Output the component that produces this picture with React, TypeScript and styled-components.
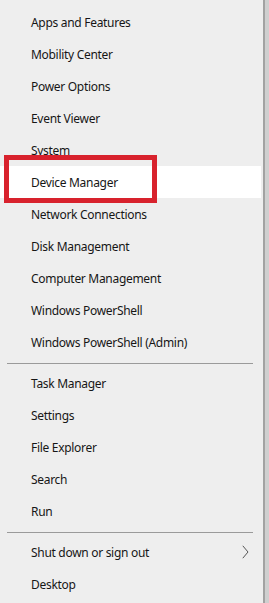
import React from 'react';
import styled, { createGlobalStyle } from 'styled-components';

const GlobalStyle = createGlobalStyle`
  html, body {
    margin: 0;
    padding: 0;
    background: #cfcfcf;
  }
  body {
    font-family: "Noto Sans", "Open Sans", sans-serif;
  }
`;

type Entry = { label: string; active?: boolean; submenu?: boolean } | 'sep';

const entries: Entry[] = [
  { label: 'Apps and Features' },
  { label: 'Mobility Center' },
  { label: 'Power Options' },
  { label: 'Event Viewer' },
  { label: 'System' },
  { label: 'Device Manager', active: true },
  { label: 'Network Connections' },
  { label: 'Disk Management' },
  { label: 'Computer Management' },
  { label: 'Windows PowerShell' },
  { label: 'Windows PowerShell (Admin)' },
  'sep',
  { label: 'Task Manager' },
  { label: 'Settings' },
  { label: 'File Explorer' },
  { label: 'Search' },
  { label: 'Run' },
  'sep',
  { label: 'Shut down or sign out', submenu: true },
  { label: 'Desktop' },
];

const Page = styled.div`
  display: flex;
  height: 603px;
  overflow: hidden;
`;

const Menu = styled.ul`
  list-style: none;
  margin: 0;
  padding: 6px 0 0;
  width: 265px;
  height: 603px;
  box-sizing: border-box;
  background: #eeeeee;
  border-right: 2px solid #a2a2a2;
`;

const Item = styled.li<{ $active?: boolean }>`
  position: relative;
  display: flex;
  align-items: center;
  justify-content: space-between;
  height: 32px;
  padding: 0 12px 0 31px;
  margin-right: 2px;
  font-size: 12px;
  letter-spacing: -0.3px;
  color: #161616;
  background: ${(p) => (p.$active ? '#ffffff' : 'transparent')};
  cursor: default;
`;

const Separator = styled.li`
  height: 1px;
  margin: 5px 10px 3px 7px;
  background: #9a9a9a;
`;

// red annotation box drawn over the highlighted row
const Highlight = styled.span`
  position: absolute;
  left: 4px;
  top: -11px;
  width: 153px;
  height: 48px;
  box-sizing: border-box;
  border: 5px solid #d8222d;
  pointer-events: none;
`;

const Chevron = () => (
  <svg width="7" height="14" viewBox="0 0 7 14" fill="none">
    <path d="M0.8 0.8 L6 7 L0.8 13.2" stroke="#555" strokeWidth="1" />
  </svg>
);

export default function App() {
  return (
    <Page>
      <GlobalStyle />
      <Menu>
        {entries.map((e, i) =>
          e === 'sep' ? (
            <Separator key={i} />
          ) : (
            <Item key={i} $active={e.active}>
              <span>{e.label}</span>
              {e.submenu && <Chevron />}
              {e.active && <Highlight />}
            </Item>
          )
        )}
      </Menu>
    </Page>
  );
}
